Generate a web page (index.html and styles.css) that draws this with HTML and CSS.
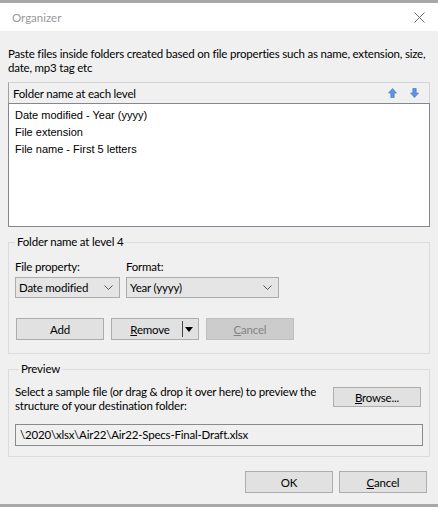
FILE: index.html
```html
<!DOCTYPE html>
<html lang="en">
<head>
    <meta charset="UTF-8">
    <title>Organizer</title>
    <link rel="stylesheet" href="styles.css">
</head>
<body>
    <div class="window">
        <div class="titlebar">
            <span class="title">Organizer</span>
            <svg class="close" width="11" height="11" viewBox="0 0 11 11">
                <path d="M0.5 0.5L10.5 10.5M10.5 0.5L0.5 10.5" stroke="#6d6d6d" stroke-width="1" fill="none"/>
            </svg>
        </div>
        <div class="content">
            <p class="intro">Paste files inside folders created based on file properties such as name, extension, size, date, mp3 tag etc</p>

            <div class="levels">
                <div class="levels-head">
                    <span>Folder name at each level</span>
                    <span class="arrows">
                        <svg width="9" height="10" viewBox="0 0 9 10">
                            <path d="M4.5 0.5L8.5 5H6.2V9.5H2.8V5H0.5Z" fill="#5b95e3" stroke="#3d74c4" stroke-width="0.6"/>
                        </svg>
                        <svg width="9" height="10" viewBox="0 0 9 10">
                            <path d="M4.5 9.5L8.5 5H6.2V0.5H2.8V5H0.5Z" fill="#5b95e3" stroke="#3d74c4" stroke-width="0.6"/>
                        </svg>
                    </span>
                </div>
                <ul class="levels-list">
                    <li>Date modified - Year (yyyy)</li>
                    <li>File extension</li>
                    <li>File name - First 5 letters</li>
                </ul>
            </div>

            <fieldset class="group level-group">
                <legend>Folder name at level 4</legend>
                <div class="fields">
                    <div class="field">
                        <label>File property:</label>
                        <div class="combo combo-prop">
                            <span>Date modified</span>
                            <svg width="9" height="5" viewBox="0 0 9 5"><path d="M0.5 0.5L4.5 4.5L8.5 0.5" stroke="#555" fill="none"/></svg>
                        </div>
                    </div>
                    <div class="field">
                        <label>Format:</label>
                        <div class="combo combo-format">
                            <span>Year (yyyy)</span>
                            <svg width="9" height="5" viewBox="0 0 9 5"><path d="M0.5 0.5L4.5 4.5L8.5 0.5" stroke="#555" fill="none"/></svg>
                        </div>
                    </div>
                </div>
                <div class="actions">
                    <button class="btn">Add</button>
                    <button class="btn split">
                        <span class="split-label"><u>R</u>emove</span>
                        <span class="split-sep"></span>
                        <span class="split-arrow"></span>
                    </button>
                    <button class="btn" disabled><u>C</u>ancel</button>
                </div>
            </fieldset>

            <fieldset class="group preview-group">
                <legend>Preview</legend>
                <div class="preview-row">
                    <p class="preview-text">Select a sample file (or drag &amp; drop it over here) to preview the structure of your destination folder:</p>
                    <button class="btn"><u>B</u>rowse...</button>
                </div>
                <div class="path-box">\2020\xlsx\Air22\Air22-Specs-Final-Draft.xlsx</div>
            </fieldset>

            <div class="footer">
                <button class="btn">OK</button>
                <button class="btn"><u>C</u>ancel</button>
            </div>
        </div>
    </div>
</body>
</html>
```

FILE: styles.css
```css
* {
    box-sizing: border-box;
}
body {
    margin: 0;
    font-family: "Lato", "Liberation Sans", sans-serif;
    font-size: 11.5px;
    letter-spacing: -0.2px;
    color: #000;
    background: #f0f0f0;
}
.window {
    height: 507px;
    border-top: 3px solid #a8a8a8;
    border-bottom: 3px solid #a8a8a8;
    background: #f0f0f0;
    display: flex;
    flex-direction: column;
}
.titlebar {
    height: 28px;
    background: #fff;
    display: flex;
    align-items: center;
    justify-content: space-between;
    padding: 0 13px 0 12px;
}
.title {
    color: #999;
    font-size: 11.5px;
    letter-spacing: 0;
}
.content {
    padding: 0 8px;
}
.intro {
    margin: 16px 0 0;
    line-height: 13.5px;
    height: 27px;
}

/* level list */
.levels {
    margin-top: 8px;
}
.levels-head {
    height: 21px;
    border: 1px solid #d4d4d4;
    border-bottom: none;
    border-left-color: #a0a0a0;
    display: flex;
    align-items: center;
    justify-content: space-between;
    padding: 0 10px 0 4px;
}
.arrows {
    display: flex;
    gap: 13px;
}
.arrows svg {
    display: block;
}
.levels-list {
    list-style: none;
    margin: 0;
    padding: 3px 6px;
    height: 124px;
    background: #fff;
    border: 1px solid #828790;
    font-family: "Liberation Sans", sans-serif;
    font-size: 11px;
    letter-spacing: 0;
}
.levels-list li {
    line-height: 17px;
}

/* group boxes */
.group {
    margin: 8px 0 0;
    border: 1px solid #dcdcdc;
    padding: 0 8px 0 6px;
    min-width: 0;
}
.group legend {
    line-height: 14px;
    padding: 0 2px;
    margin-left: 0;
}
.preview-group legend {
    margin-left: 4px;
}
.level-group {
    padding-bottom: 13px;
}
.fields {
    display: flex;
    gap: 6px;
    margin-top: 11px;
}
.field label {
    display: block;
    line-height: 14px;
    margin-bottom: 3px;
}
.combo {
    height: 21px;
    background: #e5e5e5;
    border: 1px solid #acacac;
    display: flex;
    align-items: center;
    justify-content: space-between;
    padding: 0 6px 0 3px;
}
.combo-prop {
    width: 105px;
}
.combo-format {
    width: 153px;
}
.actions {
    display: flex;
    margin-top: 20px;
    padding-left: 1px;
    gap: 7px;
}

/* buttons */
.btn {
    width: 88px;
    height: 22px;
    font: inherit;
    letter-spacing: inherit;
    color: #000;
    background: #e1e1e1;
    border: 1px solid #adadad;
    padding: 0;
}
.btn:disabled {
    background: #cccccc;
    border-color: #bfbfbf;
    color: #838383;
}
.split {
    display: flex;
    align-items: center;
    padding: 0 5px 0 0;
}
.split-label {
    flex: 1;
    text-align: center;
    padding-left: 6px;
}
.split-sep {
    width: 1px;
    height: 16px;
    background: #444;
    margin-right: 2px;
}
.split-arrow {
    width: 0;
    height: 0;
    border-left: 4px solid transparent;
    border-right: 4px solid transparent;
    border-top: 5px solid #000;
}

/* preview */
.preview-group {
    padding-bottom: 10px;
}
.preview-row {
    display: flex;
    justify-content: space-between;
    align-items: flex-start;
    margin-top: 9px;
}
.preview-text {
    margin: 0;
    width: 312px;
    line-height: 14px;
}
.preview-row .btn {
    margin-top: 2px;
    height: 20px;
}
.path-box {
    margin-top: 11px;
    height: 22px;
    width: 408px;
    border: 1px solid #8a8a8a;
    background: #f0f0f0;
    line-height: 20px;
    padding-left: 4px;
}

.footer {
    display: flex;
    justify-content: flex-end;
    gap: 6px;
    margin-top: 14px;
    padding-right: 3px;
}
```
